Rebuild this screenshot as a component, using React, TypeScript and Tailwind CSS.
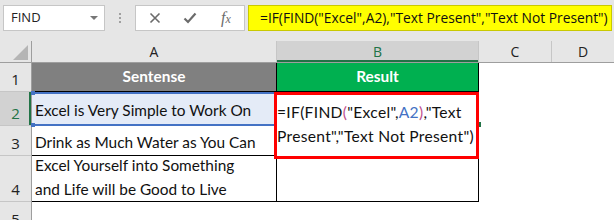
import React from "react";

const cellFont = { fontFamily: "Lato, 'Liberation Sans', sans-serif" };

export default function App() {
  const ui = "font-['Open_Sans',sans-serif]";
  return (
    <div className="relative w-[614px] h-[220px] overflow-hidden bg-[#e6e6e6]">
      {/* Toolbar */}
      <div className="flex h-[41px] items-start pt-[5px] pl-[3px]">
        <div className="flex h-[26px] w-[102px] items-center justify-between border border-[#c6c6c6] bg-white pl-[7px] pr-[5px]">
          <span className={`${ui} text-[13px] text-[#222]`}>FIND</span>
          <svg width="10" height="6" viewBox="0 0 10 6">
            <path d="M1 1 L9 1 L5 5 Z" fill="#777" />
          </svg>
        </div>
        <div className="flex h-[26px] w-[30px] flex-col items-center justify-center gap-[2px]">
          <div className="h-[2px] w-[2px] bg-[#a0a0a0]" />
          <div className="h-[2px] w-[2px] bg-[#a0a0a0]" />
          <div className="h-[2px] w-[2px] bg-[#a0a0a0]" />
        </div>
        <div className="flex h-[26px] w-[110px] items-center border border-[#c6c6c6] bg-white">
          <div className="flex w-[36px] justify-center pl-[2px]">
            <svg width="12" height="12" viewBox="0 0 12 12">
              <path d="M1.5 1.5 L10.5 10.5 M10.5 1.5 L1.5 10.5" stroke="#6b6b6b" strokeWidth="1.6" />
            </svg>
          </div>
          <div className="flex w-[36px] justify-center">
            <svg width="14" height="12" viewBox="0 0 14 12">
              <path d="M1.5 6.5 L5 10 L12.5 1.5" stroke="#6b6b6b" strokeWidth="2.2" fill="none" />
            </svg>
          </div>
          <div className="flex w-[36px] justify-center">
            <span className="font-['Liberation_Serif',serif] text-[16px] italic text-[#6b6b6b] leading-none">
              f<span className="text-[12px]">x</span>
            </span>
          </div>
        </div>
        <div className="ml-[3px] flex h-[26px] w-[364px] items-center border border-[#c9c900] bg-[#ffff00] pl-[11px]">
          <span className={`${ui} text-[13.8px] text-[#111] whitespace-nowrap`}>
            =IF(FIND("Excel",A2),"Text Present","Text Not Present")
          </span>
        </div>
      </div>

      {/* Column header */}
      <div className={`flex h-[22px] border-b border-[#9e9e9e] ${ui} text-[14px] text-[#222]`}>
        <div className="relative w-[32px] border-r border-[#9e9e9e]">
          <svg className="absolute left-[12px] top-[4px]" width="16" height="16" viewBox="0 0 16 16">
            <path d="M16 0 L16 15 L1 15 Z" fill="#b5b5b5" />
          </svg>
        </div>
        <div className="flex w-[245px] items-center justify-center border-r border-[#c6c6c6]">A</div>
        <div className="flex w-[202px] items-center justify-center border-r border-[#c6c6c6] bg-[#d2d2d2] text-[#217346] shadow-[inset_0_-2px_0_#217346]">B</div>
        <div className="flex w-[73px] items-center justify-center border-r border-[#c6c6c6]">C</div>
        <div className="flex flex-1 items-center justify-center">D</div>
      </div>

      {/* Body */}
      <div className="flex">
        {/* Row headers */}
        <div className={`w-[32px] border-r border-[#9e9e9e] ${ui} text-[15px] text-[#222]`}>
          <div className="flex h-[29px] items-end justify-center border-b border-[#c6c6c6] pb-[1px]">1</div>
          <div className="flex h-[34px] items-end justify-center border-b border-[#c6c6c6] bg-[#d2d2d2] pb-[1px] text-[#217346] shadow-[inset_-2px_0_0_#217346]">2</div>
          <div className="flex h-[30px] items-end justify-center border-b border-[#c6c6c6] pb-[1px]">3</div>
          <div className="flex h-[46px] items-end justify-center border-b border-[#c6c6c6] pb-[1px]">4</div>
          <div className="flex h-[30px] items-end justify-center border-b border-[#c6c6c6] pb-[1px]">5</div>
        </div>
        {/* Grid */}
        <div className="flex-1 bg-white text-[15.4px] text-[#111]" style={cellFont}>
          <div className="flex h-[29px]">
            <div className="flex w-[245px] items-center justify-center border-r border-b border-black bg-[#808080] font-bold text-white">Sentense</div>
            <div className="flex w-[202px] items-center justify-center border-r border-b border-black bg-[#00b050] font-bold text-white">Result</div>
          </div>
          <div className="flex h-[34px]">
            <div className="relative flex w-[245px] items-end border-r border-b border-black bg-[#e4ebf7] pb-[3px] pl-[3px] leading-[24px]">
              <div className="absolute left-0 right-[1px] top-0 h-[2px] bg-[#4472c4]" />
              <div className="absolute left-0 right-[1px] bottom-[-1px] h-[2px] bg-[#4472c4]" />
              <div className="absolute left-[-1px] top-[-1px] h-[4px] w-[4px] bg-[#4472c4]" />
              <div className="absolute left-[-1px] bottom-[-2px] h-[4px] w-[4px] bg-[#4472c4]" />
              Excel is Very Simple to Work On
            </div>
            <div className="w-[202px] border-r border-b border-black" />
          </div>
          <div className="flex h-[30px]">
            <div className="flex w-[245px] items-end border-r border-b border-black pb-[1px] pl-[3px] leading-[24px]">Drink as Much Water as You Can</div>
            <div className="w-[202px] border-r border-b border-black" />
          </div>
          <div className="flex h-[46px]">
            <div className="flex w-[245px] items-end border-r border-b border-black pb-[0px] pl-[3px] leading-[24px]">
              <div>
                Excel Yourself into Something
                <br />
                and Life will be Good to Live
              </div>
            </div>
            <div className="w-[202px] border-r border-b border-black" />
          </div>
        </div>
      </div>

      {/* Edit box over B2 */}
      <div
        className="absolute left-[274px] top-[92px] h-[67px] w-[205px] border-[3px] border-[#ff0000] bg-white pl-[0px] pt-[5px] text-[15.6px] leading-[24px] tracking-[0.3px] text-[#111]"
        style={cellFont}
      >
        <div className="whitespace-nowrap">
          =IF(FIND<span className="text-[#c0508f]">(</span>"Excel",<span className="text-[#4472c4]">A2</span>
          <span className="text-[#c0508f]">)</span>,"Text
        </div>
        <div className="whitespace-nowrap">Present","Text Not Present")</div>
      </div>
      <div className="absolute left-[479px] top-[122px] h-[5px] w-[2px] bg-[#217346]" />
    </div>
  );
}
